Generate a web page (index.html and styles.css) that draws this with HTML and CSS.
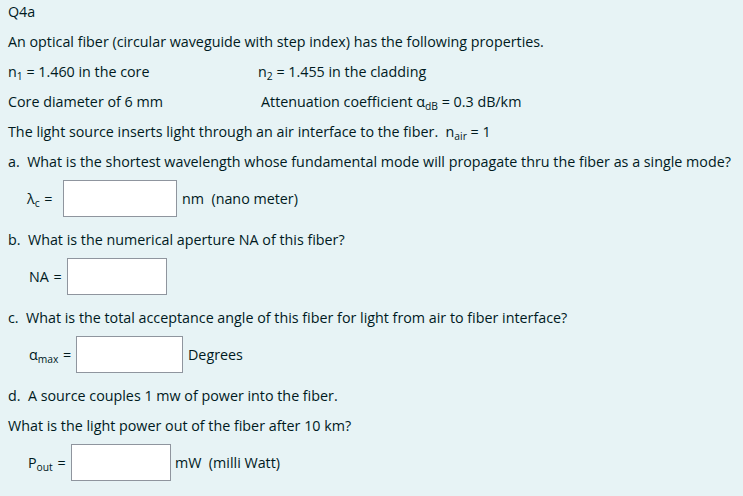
FILE: index.html
```html
<!DOCTYPE html>
<html lang="en">
<head>
<meta charset="utf-8">
<title>Q4a</title>
<link rel="stylesheet" href="styles.css">
</head>
<body>
<div class="formulation">
  <p class="line">Q4a</p>
  <p class="line">An optical fiber (circular waveguide with step index) has the following properties.</p>
  <div class="line pair">
    <span>n<sub>1</sub> = 1.460 in the core</span>
    <span>n<sub>2</sub> = 1.455 in the cladding</span>
  </div>
  <div class="line pair">
    <span>Core diameter of 6 mm</span>
    <span class="shift">Attenuation coefficient &alpha;<sub>dB</sub> = 0.3 dB/km</span>
  </div>
  <p class="line">The light source inserts light through an air interface to the fiber.&nbsp; n<sub>air</sub> = 1</p>

  <p class="line q">a.&nbsp; What is the shortest wavelength whose fundamental mode will propagate thru the fiber as a single mode?</p>
  <div class="answer a-lambda">
    <span class="label">&lambda;<sub>c</sub> =</span>
    <input class="box box-lambda" type="text" aria-label="lambda c">
    <span class="unit">nm&nbsp; (nano meter)</span>
  </div>

  <p class="line q">b.&nbsp; What is the numerical aperture NA of this fiber?</p>
  <div class="answer a-na">
    <span class="label">NA =</span>
    <input class="box box-na" type="text" aria-label="NA">
  </div>

  <p class="line q">c.&nbsp; What is the total acceptance angle of this fiber for light from air to fiber interface?</p>
  <div class="answer a-alpha">
    <span class="label">&alpha;<sub>max</sub> =</span>
    <input class="box box-alpha" type="text" aria-label="alpha max">
    <span class="unit">Degrees</span>
  </div>

  <p class="line">d.&nbsp; A source couples 1 mw of power into the fiber.</p>
  <p class="line q">What is the light power out of the fiber after 10 km?</p>
  <div class="answer a-p">
    <span class="label">P<sub>out</sub> =</span>
    <input class="box box-p" type="text" aria-label="P out">
    <span class="unit unit-p">mW&nbsp; (milli Watt)</span>
  </div>
</div>
</body>
</html>
```

FILE: styles.css
```css
html, body {
  margin: 0;
  padding: 0;
  background: #e7f3f5;
}

body {
  width: 743px;
  height: 496px;
  overflow: hidden;
}

.formulation {
  padding: 2px 8px 0 8px;
  font-family: "Open Sans", "Liberation Sans", sans-serif;
  font-size: 14.3px;
  line-height: 20px;
  color: #001a1e;
}

.line {
  margin: 0 0 10px 0;
  height: 20px;
  white-space: nowrap;
}

.line.q {
  margin-bottom: 8px;
}

.pair {
  display: grid;
  grid-template-columns: 250px auto;
}

.shift {
  padding-left: 3px;
}

sub {
  font-size: 0.72em;
  line-height: 0;
  vertical-align: -0.3em;
}

.answer {
  display: flex;
  align-items: center;
  height: 37px;
  margin-bottom: 13px;
  white-space: nowrap;
}

.label {
  flex: none;
  word-spacing: 1px;
}

.a-lambda { padding-left: 19px; }
.a-lambda .label { width: 36px; }
.a-na { padding-left: 21px; }
.a-na .label { width: 38px; }
.a-alpha { padding-left: 21px; }
.a-alpha .label { width: 47px; }
.a-p { padding-left: 20px; }
.a-p .label { width: 43px; }

.box {
  flex: none;
  box-sizing: border-box;
  height: 37px;
  margin: 0;
  padding: 0 6px;
  border: 1px solid #8f959e;
  border-radius: 0;
  background: #ffffff;
  font: inherit;
}

.box-lambda { width: 114px; }
.box-na { width: 100px; }
.box-alpha { width: 107px; }
.box-p { width: 100px; }

.unit {
  margin-left: 5px;
}

.unit-p {
  margin-left: 4px;
}
```
